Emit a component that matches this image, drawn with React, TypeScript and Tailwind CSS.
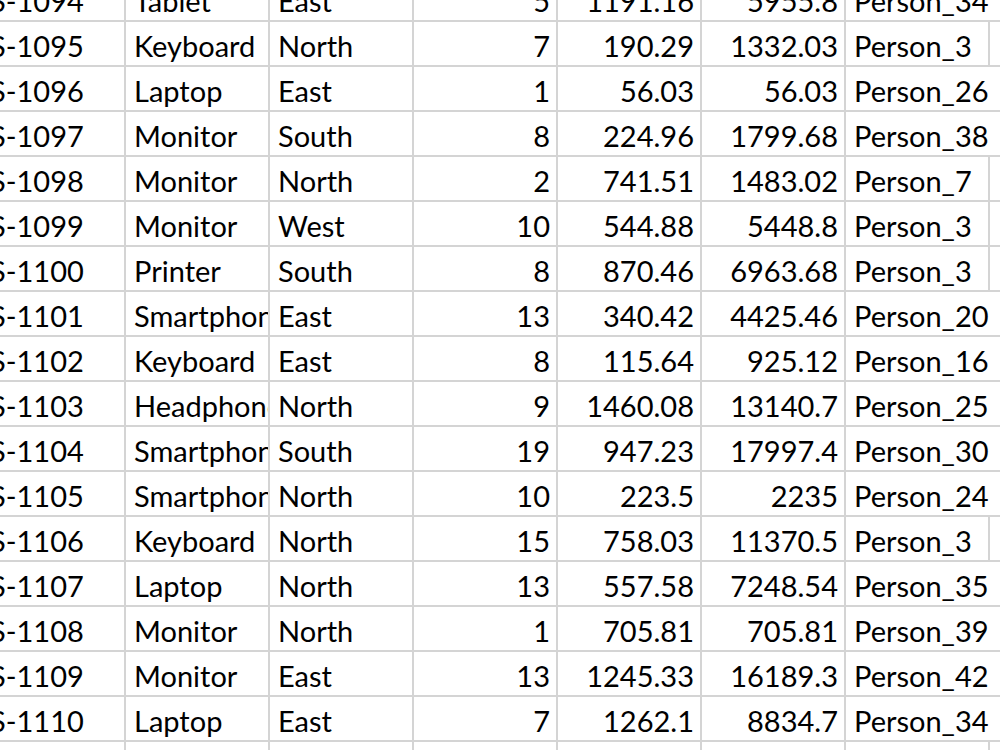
import React from "react";

type Row = [string, string, string, string, string, string, string];

const rows: Row[] = [
  ["S-1094", "Tablet", "East", "5", "1191.16", "5955.8", "Person_34"],
  ["S-1095", "Keyboard", "North", "7", "190.29", "1332.03", "Person_3"],
  ["S-1096", "Laptop", "East", "1", "56.03", "56.03", "Person_26"],
  ["S-1097", "Monitor", "South", "8", "224.96", "1799.68", "Person_38"],
  ["S-1098", "Monitor", "North", "2", "741.51", "1483.02", "Person_7"],
  ["S-1099", "Monitor", "West", "10", "544.88", "5448.8", "Person_3"],
  ["S-1100", "Printer", "South", "8", "870.46", "6963.68", "Person_3"],
  ["S-1101", "Smartphone", "East", "13", "340.42", "4425.46", "Person_20"],
  ["S-1102", "Keyboard", "East", "8", "115.64", "925.12", "Person_16"],
  ["S-1103", "Headphones", "North", "9", "1460.08", "13140.7", "Person_25"],
  ["S-1104", "Smartphone", "South", "19", "947.23", "17997.4", "Person_30"],
  ["S-1105", "Smartphone", "North", "10", "223.5", "2235", "Person_24"],
  ["S-1106", "Keyboard", "North", "15", "758.03", "11370.5", "Person_3"],
  ["S-1107", "Laptop", "North", "13", "557.58", "7248.54", "Person_35"],
  ["S-1108", "Monitor", "North", "1", "705.81", "705.81", "Person_39"],
  ["S-1109", "Monitor", "East", "13", "1245.33", "16189.3", "Person_42"],
  ["S-1110", "Laptop", "East", "7", "1262.1", "8834.7", "Person_34"],
  ["", "", "", "", "", "", ""],
];

const cell =
  "w-[144px] h-[45px] shrink-0 border-r-2 border-b-2 border-[#d4d4d4] whitespace-nowrap flex items-end pb-[5px] leading-none";

export default function App() {
  return (
    <div
      className="w-[1000px] h-[750px] overflow-hidden bg-white text-black text-[29px]"
      style={{ fontFamily: "Lato, 'Open Sans', sans-serif" }}
    >
      <div className="-mt-[23px] -ml-[18px] flex flex-col w-[1200px]">
        {rows.map((r, i) => {
          const overflow = r[6].length > 8;
          return (
            <div key={i} className="flex">
              <div className={`${cell} overflow-hidden pl-[8px]`}>{r[0]}</div>
              <div className={`${cell} overflow-hidden pl-[8px]`}>{r[1]}</div>
              <div className={`${cell} overflow-hidden pl-[8px]`}>{r[2]}</div>
              <div className={`${cell} overflow-hidden justify-end pr-[6px]`}>{r[3]}</div>
              <div className={`${cell} overflow-hidden justify-end pr-[6px]`}>{r[4]}</div>
              <div className={`${cell} overflow-hidden justify-end pr-[6px]`}>{r[5]}</div>
              {overflow ? (
                <div className="w-[144px] h-[45px] shrink-0 border-b-2 border-[#d4d4d4] whitespace-nowrap flex items-end pb-[5px] leading-none pl-[8px] overflow-visible">
                  {r[6]}
                </div>
              ) : (
                <div className={`${cell} overflow-hidden pl-[8px]`}>{r[6]}</div>
              )}
              <div className="w-[144px] h-[45px] shrink-0 border-b-2 border-[#d4d4d4]" />
            </div>
          );
        })}
      </div>
    </div>
  );
}
